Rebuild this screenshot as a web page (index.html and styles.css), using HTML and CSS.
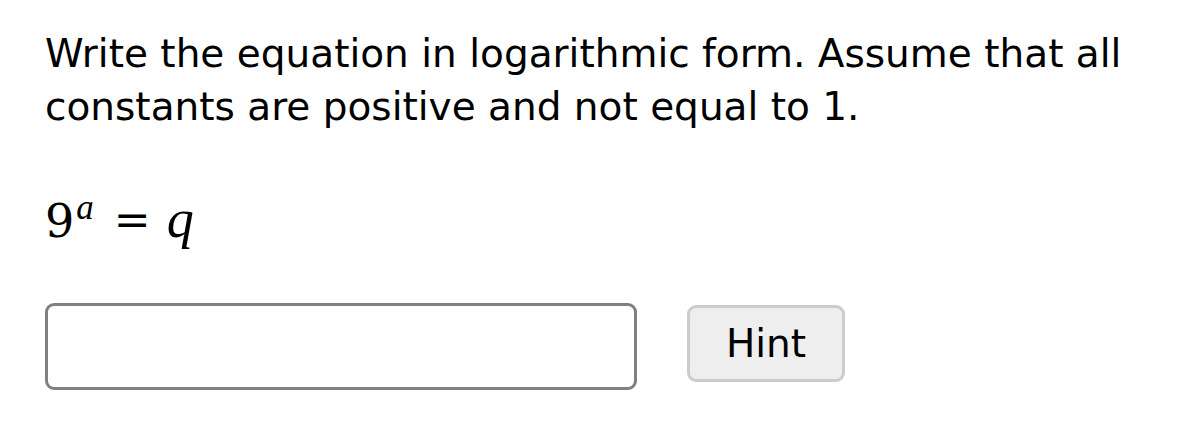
FILE: index.html
```html
<!DOCTYPE html>
<html><head><meta charset="utf-8"><link rel="stylesheet" href="styles.css"></head>
<body>
<div class="page">
  <p class="question">Write the equation in logarithmic form. Assume that all constants are positive and not equal to 1.</p>
  <div class="math"><span class="num">9</span><span class="sup">a</span><span class="eq">=</span><span class="var">q</span></div>
  <div class="answer-row">
    <input class="answer" type="text" aria-label="Answer">
    <button class="hint" type="button">Hint</button>
  </div>
</div>
</body></html>
```
FILE: styles.css
```css
html,body{margin:0;padding:0;background:#fff}
.page{padding:27px 0 0 45px}
.question{margin:0;max-width:1110px;font-family:"DejaVu Sans",sans-serif;font-size:39px;line-height:53px;color:#000}
.math{margin-top:45px;height:60px;font-family:"DejaVu Serif",serif;font-size:46px;line-height:60px;color:#000;white-space:nowrap}
.num{margin-left:0}
.sup{font-family:"Liberation Serif",serif;font-style:italic;font-size:35px;vertical-align:18px;margin-left:2px}
.eq{font-size:44px;margin-left:20px;vertical-align:2px}
.var{font-family:"Liberation Serif",serif;font-style:italic;font-size:54px;margin-left:16px}
.answer-row{display:flex;align-items:flex-start;gap:50px;margin-top:65px}
.answer{box-sizing:border-box;width:592px;height:87px;border:3px solid #808080;border-radius:9px;background:#fff;margin:0;padding:0 10px;font-family:"DejaVu Sans",sans-serif;font-size:30px;outline:none}
.hint{box-sizing:border-box;width:158px;height:77px;margin-top:2px;border:3px solid #cccccc;border-radius:9px;background:#eeeeee;font-family:"DejaVu Sans",sans-serif;font-size:39px;color:#000;padding:0}
```
